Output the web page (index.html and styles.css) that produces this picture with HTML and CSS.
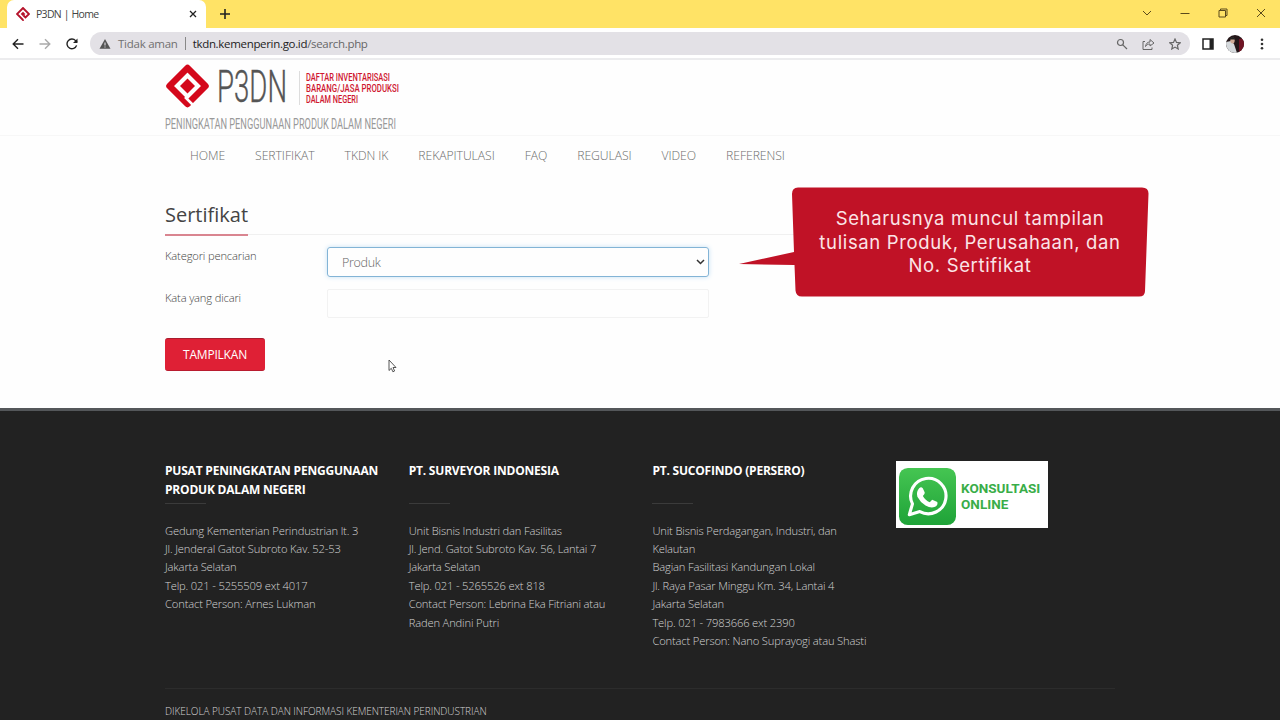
FILE: index.html
```html
<!DOCTYPE html>
<html lang="id">
<head>
    <meta charset="UTF-8">
    <title>P3DN | Home</title>
    <link rel="stylesheet" href="styles.css">
</head>
<body>
    <div class="browser">
        <div class="tabbar">
            <div class="tab">
                <svg class="favicon" width="14" height="14" viewBox="0 0 14 14">
                    <path d="M7.500 12.500 7 13 1 7l6-6 6 6-3.500 3.500-2-2" fill="none" stroke="#b5122b" stroke-width="1.900"/>
                    <path d="M7 4.700 9.300 7 7 9.300 4.700 7z" fill="#b5122b"/>
                </svg>
                <span class="tab-title">P3DN | Home</span>
                <svg class="tab-close" width="8" height="8" viewBox="0 0 8 8"><path d="M1 1l6 6M7 1L1 7" stroke="#222" stroke-width="1.300"/></svg>
            </div>
            <svg class="tab-new" width="12" height="12" viewBox="0 0 12 12"><path d="M6 1v10M1 6h10" stroke="#222" stroke-width="1.600"/></svg>
            <div class="window-buttons">
                <svg width="10" height="10" viewBox="0 0 10 10"><path d="M1 3l4 4 4-4"/></svg>
                <svg width="10" height="10" viewBox="0 0 10 10"><path d="M.5 5.500h9"/></svg>
                <svg width="10" height="10" viewBox="0 0 10 10"><path d="M1 2.500h6.500V9H1zM2.500 2.500V1H9v6.500H7.500"/></svg>
                <svg width="10" height="10" viewBox="0 0 10 10"><path d="M1 1l8 8M9 1L1 9"/></svg>
            </div>
        </div>
        <div class="toolbar">
            <svg class="nav-icon" width="12" height="12" viewBox="0 0 12 12"><path d="M11.500 6H1.500M6 1.200 1.200 6 6 10.800" stroke="#222"/></svg>
            <svg class="nav-icon" width="12" height="12" viewBox="0 0 12 12"><path d="M.5 6h10M6 1.200 10.800 6 6 10.800" stroke="#aaa"/></svg>
            <svg class="nav-icon" width="12" height="12" viewBox="0 0 12 12"><path d="M10.600 7.400A4.900 4.900 0 1 1 9.600 2.600L11 4" stroke="#222"/><path d="M11.500.5v4.500H7z" fill="#222" stroke="none"/></svg>
            <div class="address">
                <svg class="warning" width="12" height="10" viewBox="0 0 12 10"><path d="M6 0l5.500 9.800H.5z" fill="#555"/><path d="M6 3.500v3M6 7.400v1.200" stroke="#e3e1e6" stroke-width="1.100"/></svg>
                <span class="unsafe">Tidak aman</span>
                <span class="divider"></span>
                <span class="url">tkdn.kemenperin.go.id<span class="path">/search.php</span></span>
                <div class="address-icons">
                    <svg width="12" height="12" viewBox="0 0 12 12"><circle cx="4.500" cy="4.500" r="3"/><path d="M6.800 6.800 11 11"/></svg>
                    <svg width="13" height="12" viewBox="0 0 13 12"><path d="M3 3.500H1v8h9V9.500M3.500 8.500C4 5.500 5.500 4 8 4V1.500L12 5 8 8V6C6 6 4.500 6.800 3.500 8.500z" stroke-width="1"/></svg>
                    <svg width="12" height="12" viewBox="0 0 12 12"><path d="M6 1l1.500 3.400 3.700.4-2.800 2.500.8 3.700L6 9.100 2.800 11l.8-3.700L.8 4.800l3.700-.4z"/></svg>
                </div>
            </div>
            <svg class="sidepanel" width="12" height="12" viewBox="0 0 12 12"><path d="M1 1h10v10H1z" fill="none" stroke="#222" stroke-width="1.500"/><path d="M7.500 1H11v10H7.500z" fill="#222"/></svg>
            <svg class="avatar" width="18" height="18" viewBox="0 0 18 18">
                <clipPath id="round"><circle cx="9" cy="9" r="9"/></clipPath>
                <g clip-path="url(#round)">
                    <path d="M0 0h18v18H0z" fill="#241719"/>
                    <path d="M13 4l5-1v12l-5 2z" fill="#701424"/>
                    <path d="M0 7l5-1 3 3 3 9H0z" fill="#d5d9dc"/>
                    <ellipse cx="6.500" cy="5.500" rx="2.200" ry="3" fill="#d0aa96"/>
                    <path d="M4 3.500q2.500-3 5 0v1H4z" fill="#222"/>
                </g>
            </svg>
            <svg class="menu" width="4" height="12" viewBox="0 0 4 12" fill="#333"><circle cx="2" cy="1.700" r="1.300"/><circle cx="2" cy="6" r="1.300"/><circle cx="2" cy="10.300" r="1.300"/></svg>
        </div>
    </div>

    <header class="header">
        <div class="container">
            <svg class="logo" width="240" height="74" viewBox="0 0 240 74">
                <path d="M22.500 8 40.500 26 22.500 44 4.500 26z" fill="none" stroke="#d4081b" stroke-width="6.500" stroke-linejoin="round"/>
                <path d="M22.500 18.500 30 26l-7.500 7.500L15 26z" fill="#d4081b"/>
                <path d="M20 37 31 48" stroke="#fefefe" stroke-width="2.500"/>
                <text x="52" y="42" class="logo-name" textLength="70" lengthAdjust="spacingAndGlyphs">P3DN</text>
                <path d="M134.500 11v34" stroke="#ddd"/>
                <g class="logo-side">
                    <text x="141" y="20.500" textLength="84" lengthAdjust="spacingAndGlyphs">DAFTAR INVENTARISASI</text>
                    <text x="141" y="31.700" textLength="93" lengthAdjust="spacingAndGlyphs">BARANG/JASA PRODUKSI</text>
                    <text x="141" y="43" textLength="52" lengthAdjust="spacingAndGlyphs">DALAM NEGERI</text>
                </g>
                <text x="0" y="69" class="logo-sub" textLength="231" lengthAdjust="spacingAndGlyphs">PENINGKATAN PENGGUNAAN PRODUK DALAM NEGERI</text>
            </svg>
        </div>
    </header>

    <nav class="nav container">
        <a>HOME</a>
        <a>SERTIFIKAT</a>
        <a>TKDN IK</a>
        <a>REKAPITULASI</a>
        <a>FAQ</a>
        <a>REGULASI</a>
        <a>VIDEO</a>
        <a>REFERENSI</a>
    </nav>

    <main class="main container">
        <div class="headline"><h2>Sertifikat</h2></div>
        <form>
            <div class="row">
                <label>Kategori pencarian</label>
                <div class="field active">
                    <span>Produk</span>
                    <svg width="9" height="6" viewBox="0 0 9 6"><path d="M1 1l3.500 3.500L8 1" fill="none" stroke="#333" stroke-width="1.500"/></svg>
                </div>
            </div>
            <div class="row">
                <label>Kata yang dicari</label>
                <div class="field"></div>
            </div>
            <button type="button" class="btn">TAMPILKAN</button>
        </form>
    </main>

    <footer class="footer">
        <div class="container">
            <div class="columns">
                <div class="column">
                    <h4>PUSAT PENINGKATAN PENGGUNAAN<br>PRODUK DALAM NEGERI</h4>
                    <p>Gedung Kementerian Perindustrian lt. 3<br>Jl. Jenderal Gatot Subroto Kav. 52-53<br>Jakarta Selatan<br>Telp. 021 - 5255509 ext 4017<br>Contact Person: Arnes Lukman</p>
                </div>
                <div class="column">
                    <h4>PT. SURVEYOR INDONESIA</h4>
                    <p>Unit Bisnis Industri dan Fasilitas<br>Jl. Jend. Gatot Subroto Kav. 56, Lantai 7<br>Jakarta Selatan<br>Telp. 021 - 5265526 ext 818<br>Contact Person: Lebrina Eka Fitriani atau<br>Raden Andini Putri</p>
                </div>
                <div class="column">
                    <h4>PT. SUCOFINDO (PERSERO)</h4>
                    <p>Unit Bisnis Perdagangan, Industri, dan<br>Kelautan<br>Bagian Fasilitasi Kandungan Lokal<br>Jl. Raya Pasar Minggu Km. 34, Lantai 4<br>Jakarta Selatan<br>Telp. 021 - 7983666 ext 2390<br>Contact Person: Nano Suprayogi atau Shasti</p>
                </div>
                <div class="column">
                    <div class="whatsapp">
                        <svg width="57" height="57" viewBox="0 0 58 58">
                            <linearGradient id="green" x2="0" y2="1"><stop stop-color="#45c552"/><stop offset="1" stop-color="#1fa338"/></linearGradient>
                            <rect width="58" height="58" rx="9" fill="url(#green)"/>
                            <path d="M10.500 47.500l3.200-11a18 18 0 1 1 7.500 7.800z" fill="none" stroke="#fff" stroke-width="3.200" stroke-linejoin="round"/>
                            <path d="M20.500 20.500q2-2 3.700 0l2 4.500q.3 1.500-1.900 3.500 2.500 4.700 7 6.300l2.500-2.600 5.200 2.300q1 3.700-3 5.200-3.500 1.500-9-1.500-5.500-3.500-8.300-9-1.500-5 1.800-8.700z" fill="#fff"/>
                        </svg>
                        <span>KONSULTASI<br>ONLINE</span>
                    </div>
                </div>
            </div>
            <div class="copyright">DIKELOLA PUSAT DATA DAN INFORMASI KEMENTERIAN PERINDUSTRIAN</div>
        </div>
    </footer>

    <div class="callout">
        <svg width="412" height="112" viewBox="0 0 412 112">
            <path d="M59 .5H403q6.500 0 6.500 6L406 104q0 5.500-6 5.500H63q-6 0-6.500-6L55.500 78 0 77 55 65 53 7q0-6.500 6-6.500z" fill="#c01226"/>
        </svg>
        <p>Seharusnya muncul tampilan<br>tulisan Produk, Perusahaan, dan<br>No. Sertifikat</p>
    </div>
    <svg class="cursor" width="9" height="14" viewBox="0 0 9 14"><path d="M1 1v10.500l2.300-2.200 1.600 3.500 1.700-.8L5 8.500h3z" fill="#fff" stroke="#444" stroke-width=".9"/></svg>
</body>
</html>
```

FILE: styles.css
```css
* {
    box-sizing: border-box;
}

body {
    position: relative;
    margin: 0;
    height: 720px;
    overflow: hidden;
    background-color: #fefefe;
    font-family: "Open Sans", sans-serif;
    font-weight: 300;
    color: #555;
}

svg {
    display: block;
    flex: none;
}

.container {
    width: 950px;
    margin-left: 165px;
}

/* browser */
.browser {
    height: 60px;
    background-color: #fff;
    border-bottom: 2px solid #ececee;
    font-weight: 400;
}

.tabbar {
    display: flex;
    align-items: center;
    height: 28px;
    padding-left: 7px;
    background-color: #ffe366;
}

.tab {
    display: flex;
    align-items: center;
    width: 199px;
    height: 28px;
    padding: 0 9px;
    background-color: #fff;
    border-radius: 7px 7px 0 0;
}

.tab-title {
    flex: 1;
    margin-left: 6px;
    font-size: 10.5px;
    letter-spacing: -0.7px;
    word-spacing: 0.7px;
    color: #444;
}

.tab-new {
    margin-left: 13px;
}

.window-buttons {
    display: flex;
    gap: 28px;
    margin: -2px 14px 0 auto;
    fill: none;
    stroke: #5b4a1c;
}

.toolbar {
    display: flex;
    align-items: center;
    height: 31px;
    padding-left: 12px;
}

.nav-icon {
    margin-right: 15px;
    fill: none;
    stroke-width: 1.4;
}

.address {
    display: flex;
    align-items: center;
    width: 1100px;
    height: 23px;
    margin-left: -3px;
    padding: 0 9px 0 9px;
    background-color: #e3e1e6;
    border-radius: 12px;
    font-size: 11.5px;
}

.unsafe {
    margin-left: 7px;
    letter-spacing: -0.25px;
    color: #707070;
}

.divider {
    width: 1px;
    height: 13px;
    margin: 0 7px 0 7px;
    background-color: #888;
}

.url {
    letter-spacing: -0.32px;
    color: #222;
}

.path {
    color: #666;
}

.address-icons {
    display: flex;
    gap: 14px;
    margin-left: auto;
    fill: none;
    stroke: #666;
    stroke-width: 1.2;
}

.sidepanel {
    margin-left: 12px;
}

.avatar {
    margin-left: 12px;
}

.menu {
    margin-left: 16px;
}

/* header */
.header {
    height: 76px;
    border-bottom: 1px solid #f7f7f7;
}

.logo {
    overflow: visible;
}

.logo-name {
    font: 300 44px Roboto, sans-serif;
    fill: #555;
    stroke: #555;
    stroke-width: 0.4;
}

.logo-side {
    font: 500 11.5px Roboto, sans-serif;
    fill: #cf1730;
}

.logo-sub {
    font: 400 14.5px Roboto, sans-serif;
    fill: #999;
}

.nav {
    display: flex;
    gap: 30px;
    height: 60px;
    padding: 11px 0 0 25px;
    font-size: 12.2px;
    line-height: 18px;
    letter-spacing: -0.06px;
    color: #6c6c6c;
}

/* content */
.main {
    height: 212px;
}

.headline {
    height: 39px;
    border-bottom: 1px solid #f0f0f0;
}

.headline h2 {
    display: inline-block;
    height: 40px;
    margin: 0;
    padding-top: 5px;
    border-bottom: 2px solid #d98590;
    font-size: 20px;
    font-weight: 400;
    line-height: 28px;
    color: #444;
}

.row {
    display: flex;
    height: 41.500px;
}

form {
    padding-top: 12px;
}

.row label {
    width: 162px;
    font-size: 11.200px;
    line-height: 18px;
    letter-spacing: -0.17px;
    color: #444;
}

.field {
    display: flex;
    align-items: center;
    justify-content: space-between;
    width: 382px;
    height: 29px;
    padding: 0 3px 0 14px;
    border: 1px solid #f2f2f2;
    border-radius: 2px;
    font-size: 12.500px;
    letter-spacing: -0.3px;
    color: #666;
}

.field.active {
    height: 30px;
    border-color: #83b4d6;
    border-radius: 3px;
    box-shadow: 0 0 5px #c6e0f4;
}

.btn {
    display: block;
    width: 100px;
    height: 33px;
    margin-top: 8px;
    padding: 0;
    background-color: #df2035;
    border: 0;
    border-top: 1px solid #a91c2e;
    border-bottom: 1px solid #b91c2f;
    border-radius: 3px;
    font: 400 12px "Open Sans", sans-serif;
    letter-spacing: -0.2px;
    color: #fff;
}

/* footer */
.footer {
    height: 312px;
    padding-top: 50px;
    background-color: #222;
    border-top: 3px solid #54575a;
    color: #d2d2d2;
}

.columns {
    display: grid;
    grid-template-columns: repeat(4, 243.700px);
    height: 227px;
}

.column h4 {
    position: relative;
    height: 43px;
    margin: 0 0 17.500px;
    padding-top: 1px;
    font-size: 12px;
    font-weight: 700;
    line-height: 18.500px;
    letter-spacing: -0.21px;
    white-space: nowrap;
    color: #fff;
}

.column h4::after {
    content: "";
    position: absolute;
    left: 0;
    bottom: 0;
    width: 41px;
    height: 1px;
    background-color: #3b3b3b;
}

.column p {
    margin: 0;
    font-size: 11.200px;
    line-height: 18.400px;
    letter-spacing: -0.16px;
    white-space: nowrap;
}

.whatsapp {
    display: flex;
    align-items: center;
    gap: 5px;
    width: 152px;
    height: 67px;
    padding: 3px 0 0 3px;
    background-color: #fff;
    font: 700 13.500px/16px Roboto, sans-serif;
    color: #39ad48;
}

.copyright {
    padding-top: 15px;
    border-top: 1px solid #2c2c2c;
    font-size: 10px;
    line-height: 14px;
    letter-spacing: -0.05px;
}

/* overlays */
.callout {
    position: absolute;
    left: 739px;
    top: 187px;
}

.callout p {
    position: absolute;
    left: 56px;
    top: 20px;
    width: 350px;
    margin: 0;
    font: 400 18.500px/23.500px Inter, sans-serif;
    letter-spacing: 0.65px;
    text-align: center;
    white-space: nowrap;
    color: #fbe4e7;
}

.cursor {
    position: absolute;
    left: 388px;
    top: 359px;
}
```
